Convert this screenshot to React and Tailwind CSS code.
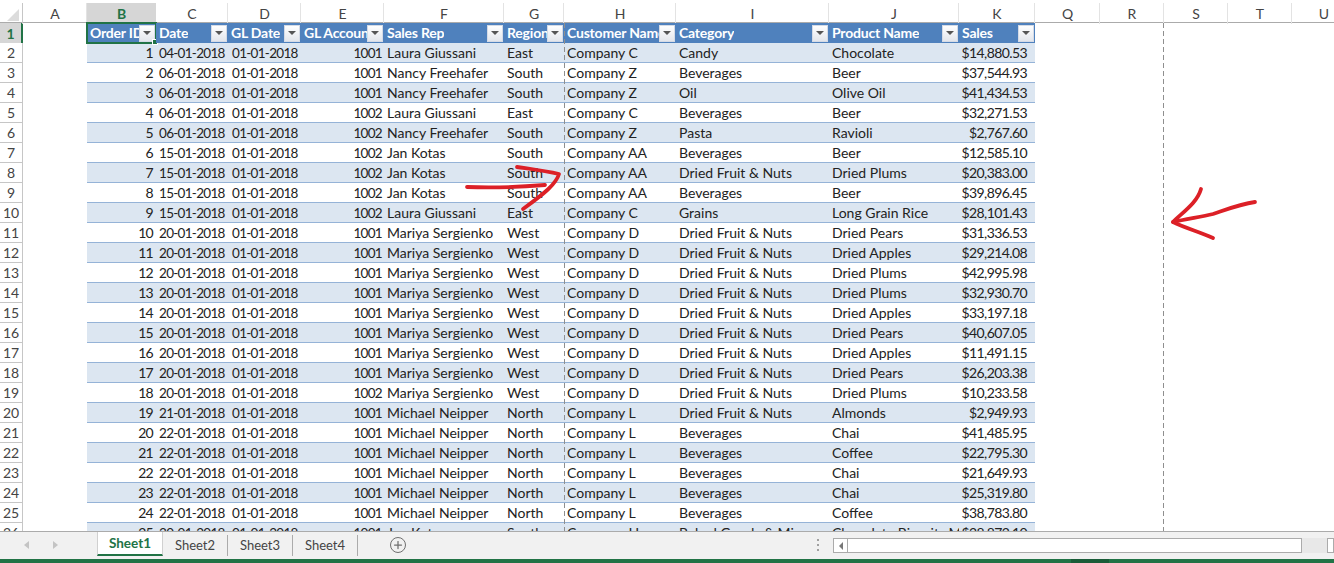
import { Plus } from 'lucide-react'

const gridCols =
  'grid grid-cols-[23px_64px_69px_72px_73px_83px_120px_60px_112px_153px_130px_76px_65px_64px_64px_64px_64px]'

const columnLetters = ['A', 'B', 'C', 'D', 'E', 'F', 'G', 'H', 'I', 'J', 'K', 'Q', 'R', 'S', 'T', 'U']

const headers = [
  'Order ID',
  'Date',
  'GL Date',
  'GL Account',
  'Sales Rep',
  'Region',
  'Customer Name',
  'Category',
  'Product Name',
  'Sales'
]

const fruit = 'Dried Fruit & Nuts'
const mariya = 'Mariya Sergienko'
const michael = 'Michael Neipper'

const orders = [
  ['04-01-2018', 1001, 'Laura Giussani', 'East', 'Company C', 'Candy', 'Chocolate', '$14,880.53'],
  ['06-01-2018', 1001, 'Nancy Freehafer', 'South', 'Company Z', 'Beverages', 'Beer', '$37,544.93'],
  ['06-01-2018', 1001, 'Nancy Freehafer', 'South', 'Company Z', 'Oil', 'Olive Oil', '$41,434.53'],
  ['06-01-2018', 1002, 'Laura Giussani', 'East', 'Company C', 'Beverages', 'Beer', '$32,271.53'],
  ['06-01-2018', 1002, 'Nancy Freehafer', 'South', 'Company Z', 'Pasta', 'Ravioli', '$2,767.60'],
  ['15-01-2018', 1002, 'Jan Kotas', 'South', 'Company AA', 'Beverages', 'Beer', '$12,585.10'],
  ['15-01-2018', 1002, 'Jan Kotas', 'South', 'Company AA', fruit, 'Dried Plums', '$20,383.00'],
  ['15-01-2018', 1002, 'Jan Kotas', 'South', 'Company AA', 'Beverages', 'Beer', '$39,896.45'],
  ['15-01-2018', 1002, 'Laura Giussani', 'East', 'Company C', 'Grains', 'Long Grain Rice', '$28,101.43'],
  ['20-01-2018', 1001, mariya, 'West', 'Company D', fruit, 'Dried Pears', '$31,336.53'],
  ['20-01-2018', 1001, mariya, 'West', 'Company D', fruit, 'Dried Apples', '$29,214.08'],
  ['20-01-2018', 1001, mariya, 'West', 'Company D', fruit, 'Dried Plums', '$42,995.98'],
  ['20-01-2018', 1001, mariya, 'West', 'Company D', fruit, 'Dried Plums', '$32,930.70'],
  ['20-01-2018', 1001, mariya, 'West', 'Company D', fruit, 'Dried Apples', '$33,197.18'],
  ['20-01-2018', 1001, mariya, 'West', 'Company D', fruit, 'Dried Pears', '$40,607.05'],
  ['20-01-2018', 1001, mariya, 'West', 'Company D', fruit, 'Dried Apples', '$11,491.15'],
  ['20-01-2018', 1001, mariya, 'West', 'Company D', fruit, 'Dried Pears', '$26,203.38'],
  ['20-01-2018', 1002, mariya, 'West', 'Company D', fruit, 'Dried Plums', '$10,233.58'],
  ['21-01-2018', 1001, michael, 'North', 'Company L', fruit, 'Almonds', '$2,949.93'],
  ['22-01-2018', 1001, michael, 'North', 'Company L', 'Beverages', 'Chai', '$41,485.95'],
  ['22-01-2018', 1001, michael, 'North', 'Company L', 'Beverages', 'Coffee', '$22,795.30'],
  ['22-01-2018', 1001, michael, 'North', 'Company L', 'Beverages', 'Chai', '$21,649.93'],
  ['22-01-2018', 1001, michael, 'North', 'Company L', 'Beverages', 'Chai', '$25,319.80'],
  ['22-01-2018', 1001, michael, 'North', 'Company L', 'Beverages', 'Coffee', '$38,783.80'],
  ['30-01-2018', 1001, 'Jan Kotas', 'South', 'Company H', 'Baked Goods & Mixes', 'Chocolate Biscuits Mix', '$28,872.10']
]

function RowHeader({ children, active }) {
  return (
    <div
      className={
        active
          ? 'flex h-5 items-center justify-center border-r-2 border-r-[#217346] bg-[#d6d6d6] font-bold text-[#217346]'
          : 'flex h-5 items-center justify-center border-r border-b border-[#c6c6c6] text-[#444]'
      }
    >
      {children}
    </div>
  )
}

function Cell({ children }) {
  return <div className="overflow-hidden whitespace-nowrap pl-[3px] leading-5">{children}</div>
}

function NumberCell({ children }) {
  return (
    <div className="overflow-hidden whitespace-nowrap pr-[3px] text-right leading-5 tracking-[-0.7px]">
      {children}
    </div>
  )
}

function HeaderCell({ label, selected }) {
  return (
    <div className="relative flex h-5 items-center justify-between bg-[#4f81bd] pl-[3px] pr-[1px] font-bold tracking-[-0.2px] text-white">
      <span className="-mt-px overflow-hidden whitespace-nowrap">{label}</span>
      <span className="flex h-[17px] w-[16px] shrink-0 items-center justify-center border border-[#d5dbe6] bg-gradient-to-b from-white to-[#e3e6ec]">
        <span className="h-0 w-0 border-x-[4px] border-t-[4px] border-x-transparent border-t-[#555]" />
      </span>
      {selected && (
        <div className="absolute -inset-x-px -inset-y-px border-2 border-[#217346]">
          <div className="absolute -right-[3px] -bottom-[3px] h-[6px] w-[6px] border border-white bg-[#217346]" />
        </div>
      )}
    </div>
  )
}

function OrderRow({ order, index }) {
  const [date, account, rep, region, customer, category, product, sales] = order
  const n = index + 1
  return (
    <div className={gridCols}>
      <RowHeader>{n + 1}</RowHeader>
      <div />
      <div
        className={
          n % 2 === 1
            ? 'col-span-10 grid h-5 grid-cols-[69px_72px_73px_83px_120px_60px_112px_153px_130px_76px] border-b border-[#95b3d7] bg-[#dce6f1] text-[#222]'
            : 'col-span-10 grid h-5 grid-cols-[69px_72px_73px_83px_120px_60px_112px_153px_130px_76px] border-b border-[#95b3d7] bg-white text-[#222]'
        }
      >
        <NumberCell>{n}</NumberCell>
        <div className="overflow-hidden whitespace-nowrap pl-[3px] text-[13.5px] leading-5 tracking-[-0.7px]">{date}</div>
        <div className="overflow-hidden whitespace-nowrap pl-[4px] text-[13.5px] leading-5 tracking-[-0.7px]">01-01-2018</div>
        <div className="overflow-hidden whitespace-nowrap pr-[2px] text-right text-[13.5px] leading-5 tracking-[-0.7px]">{account}</div>
        <Cell>{rep}</Cell>
        <Cell>{region}</Cell>
        <Cell>{customer}</Cell>
        <Cell>{category}</Cell>
        <Cell>{product}</Cell>
        <div className="overflow-hidden whitespace-nowrap pr-2 text-right leading-5 tracking-[-0.6px]">{sales}</div>
      </div>
    </div>
  )
}

function Sheet() {
  return (
    <div className="relative min-h-0 flex-1 overflow-hidden pt-[3px] text-[14px]">
      {/* column letters */}
      <div className={gridCols + ' h-5 border-b border-[#ababab]'}>
        <div className="relative border-r border-[#c6c6c6]">
          <span className="absolute right-[3px] bottom-[3px] h-0 w-0 border-b-[12px] border-l-[12px] border-b-[#dcdcdc] border-l-transparent" />
        </div>
        {columnLetters.map(letter => (
          <div
            key={letter}
            className={
              letter === 'B'
                ? 'flex items-center justify-center bg-[#d6d6d6] font-bold text-[#217346]'
                : 'flex items-center justify-center border-r border-[#e3e3e3] pl-px text-[#444]'
            }
          >
            {letter}
          </div>
        ))}
      </div>

      {/* table header */}
      <div className={gridCols}>
        <RowHeader active>1</RowHeader>
        <div />
        {headers.map((h, i) => (
          <HeaderCell key={h} label={h} selected={i === 0} />
        ))}
      </div>

      {orders.map((order, i) => (
        <OrderRow key={i} order={order} index={i} />
      ))}

      {/* page break lines */}
      <div className="absolute top-[23px] bottom-0 left-[564px] w-px bg-[repeating-linear-gradient(to_bottom,#8f8f8f_0,#8f8f8f_5px,transparent_5px,transparent_8px)]" />
      <div className="absolute top-[23px] bottom-0 left-[1163px] w-px bg-[repeating-linear-gradient(to_bottom,#8f8f8f_0,#8f8f8f_5px,transparent_5px,transparent_8px)]" />

      {/* hand drawn arrows */}
      <svg className="pointer-events-none absolute inset-0 h-full w-full" fill="none">
        <g stroke="#dc2027" strokeWidth="3.8" strokeLinecap="round" strokeLinejoin="round">
          <path d="M467 187 C490 188 520 187 545 185" />
          <path d="M517 167 C530 169 545 171 559 174 C556 184 545 193 523 209" />
          <path d="M1255 202 C1240 204 1225 210 1213 214 C1200 217 1185 219 1173 222 C1183 212 1197 203 1201 189" />
          <path d="M1173 222 C1185 228 1200 232 1213 238" />
        </g>
      </svg>
    </div>
  )
}

function SheetTab({ label }) {
  return (
    <div className="flex h-[21px] w-[65px] items-center justify-center border-r border-[#ababab] text-[13px] text-[#444]">
      {label}
    </div>
  )
}

function TabBar() {
  return (
    <div className="flex h-[28px] shrink-0 items-start border-t border-[#ababab] bg-[#f1f1f1]">
      <div className="flex h-[26px] w-[97px] items-center gap-[24px] pl-[24px]">
        <span className="h-0 w-0 border-y-[4px] border-r-[5px] border-y-transparent border-r-[#c4c4c4]" />
        <span className="h-0 w-0 border-y-[4px] border-l-[5px] border-y-transparent border-l-[#c4c4c4]" />
      </div>
      <div className="flex h-[24px] w-[66px] items-center justify-center border-x border-b-2 border-[#217346] border-x-[#d0d0d0] bg-white text-[13.5px] font-bold text-[#217346]">
        Sheet1
      </div>
      <div className="mt-[3px] flex">
        <SheetTab label="Sheet2" />
        <SheetTab label="Sheet3" />
        <SheetTab label="Sheet4" />
      </div>
      <div className="mt-[5px] ml-[32px] flex h-4 w-4 items-center justify-center rounded-full border border-[#6f6f6f]">
        <Plus size={12} strokeWidth={2.5} color="#6f6f6f" />
      </div>

      <div className="mt-[7px] ml-[411px] flex h-[12px] w-[3px] flex-col justify-between">
        <span className="h-[2px] w-[2px] bg-[#a0a0a0]" />
        <span className="h-[2px] w-[2px] bg-[#a0a0a0]" />
        <span className="h-[2px] w-[2px] bg-[#a0a0a0]" />
      </div>

      {/* horizontal scrollbar */}
      <div className="mt-[6px] ml-[13px] flex h-[15px] flex-1 items-stretch">
        <div className="flex w-[15px] items-center justify-center border border-[#ababab] bg-white">
          <span className="h-0 w-0 border-y-[4px] border-r-[4px] border-y-transparent border-r-[#777]" />
        </div>
        <div className="w-[454px] border-y border-r border-[#ababab] bg-white" />
        <div className="w-[25px] bg-[#e8e8e8]" />
        <div className="flex-1 border border-[#ababab] bg-white" />
      </div>
    </div>
  )
}

export default function App() {
  return (
    <div className="flex h-[563px] w-[1334px] flex-col overflow-hidden bg-white font-['Lato',sans-serif]">
      <Sheet />
      <TabBar />
      <div className="h-[4px] shrink-0 bg-[#217346] pl-[1071px]">
        <div className="h-full w-[38px] bg-[#1a5c38]" />
      </div>
    </div>
  )
}
